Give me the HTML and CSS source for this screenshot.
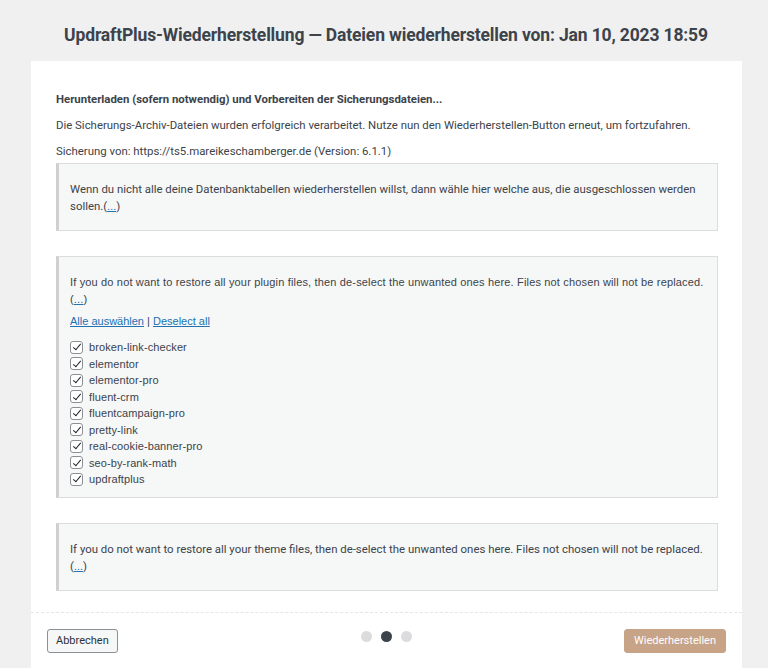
FILE: index.html
```html
<!DOCTYPE html>
<html lang="de">
<head>
    <meta charset="UTF-8">
    <title>UpdraftPlus-Wiederherstellung</title>
    <link rel="stylesheet" href="styles.css">
</head>
<body>
    <h1 class="title">UpdraftPlus-Wiederherstellung — Dateien wiederherstellen von: Jan 10, 2023 18:59</h1>
    <div class="card">
        <div class="content">
            <p class="step">Herunterladen (sofern notwendig) und Vorbereiten der Sicherungsdateien...</p>
            <p>Die Sicherungs-Archiv-Dateien wurden erfolgreich verarbeitet. Nutze nun den Wiederherstellen-Button erneut, um fortzufahren.</p>
            <p class="source">Sicherung von: https://ts5.mareikeschamberger.de (Version: 6.1.1)</p>

            <div class="notice">
                <p>Wenn du nicht alle deine Datenbanktabellen wiederherstellen willst, dann wähle hier welche aus, die ausgeschlossen werden sollen.(<a href="#" class="more">...</a>)</p>
            </div>

            <div class="notice wide">
                <p>If you do not want to restore all your plugin files, then de-select the unwanted ones here. Files not chosen will not be replaced. (<a href="#" class="more">...</a>)</p>
                <p class="select"><a href="#">Alle auswählen</a> | <a href="#">Deselect all</a></p>
                <ul class="plugins">
                    <li><span class="check"></span>broken-link-checker</li>
                    <li><span class="check"></span>elementor</li>
                    <li><span class="check"></span>elementor-pro</li>
                    <li><span class="check"></span>fluent-crm</li>
                    <li><span class="check"></span>fluentcampaign-pro</li>
                    <li><span class="check"></span>pretty-link</li>
                    <li><span class="check"></span>real-cookie-banner-pro</li>
                    <li><span class="check"></span>seo-by-rank-math</li>
                    <li><span class="check"></span>updraftplus</li>
                </ul>
            </div>

            <div class="notice">
                <p>If you do not want to restore all your theme files, then de-select the unwanted ones here. Files not chosen will not be replaced. (<a href="#" class="more">...</a>)</p>
            </div>
        </div>
        <div class="footer">
            <button class="btn">Abbrechen</button>
            <div class="dots">
                <span class="dot"></span>
                <span class="dot current"></span>
                <span class="dot"></span>
            </div>
            <button class="btn primary">Wiederherstellen</button>
        </div>
    </div>
</body>
</html>
```

FILE: styles.css
```css
body {
    font-family: "Roboto", "Liberation Sans", Arial, sans-serif;
    color: #3c434a;
    background-color: #f0f0f1;
    margin: 0;
    font-size: 11.4px;
}
p {
    margin: 0;
}
a {
    color: #2271b1;
}
.title {
    font-size: 17.5px;
    font-weight: bold;
    color: #3c434a;
    text-align: center;
    margin: 0;
    padding: 25px 0 0 4px;
    height: 36px;
    letter-spacing: -0.15px;
}
.card {
    background-color: #fff;
    margin: 0 26px 0 31px;
}
.content {
    padding: 30px 24px 21px 25px;
}
.content > p {
    line-height: 16px;
    margin-bottom: 10px;
}
.content > p.step {
    font-weight: bold;
}
.content > p.source {
    margin-bottom: 4px;
}
.notice {
    background-color: #f6f7f7;
    border: 1px solid #dcdcde;
    border-left: 3px solid #d0d0d2;
    padding: 17px 10px 15px 11px;
    margin-bottom: 25px;
}
.notice:last-child {
    margin-bottom: 0;
}
.notice p {
    line-height: 17px;
}
.notice.wide {
    font-family: "Liberation Sans", Arial, sans-serif;
    font-size: 11px;
    letter-spacing: 0.16px;
    padding-bottom: 9px;
}
.notice .select {
    margin: 5px 0 9px;
    font-size: 11px;
    letter-spacing: 0;
}
.plugins {
    margin: 0;
    padding: 0;
    list-style: none;
}
.plugins li {
    display: flex;
    align-items: center;
    height: 16.5px;
    font-size: 11px;
    letter-spacing: 0.1px;
}
.check {
    position: relative;
    width: 11px;
    height: 11px;
    border: 1px solid #8c8f94;
    border-radius: 3px;
    background-color: #fff;
    margin-right: 6px;
}
.check::after {
    content: "";
    position: absolute;
    left: 3.5px;
    top: 0.5px;
    width: 3px;
    height: 7px;
    border: solid #1d2327;
    border-width: 0 1.6px 1.6px 0;
    transform: rotate(40deg);
}
.footer {
    display: flex;
    justify-content: space-between;
    align-items: center;
    border-top: 1px dashed #e6e6e6;
    padding: 16px 16px 16px 16px;
}
.btn {
    font-family: "Roboto", "Liberation Sans", Arial, sans-serif;
    font-size: 11px;
    color: #2c3338;
    background-color: #f6f7f7;
    border: 1px solid #8c8f94;
    border-radius: 3px;
    height: 24px;
    padding: 0 8px;
}
.btn.primary {
    color: #fff;
    background-color: #c7a488;
    border-color: #c7a488;
    padding: 0 9px;
}
.dots {
    display: flex;
    gap: 9px;
    margin-bottom: 9px;
    margin-left: 32px;
}
.dot {
    width: 11px;
    height: 11px;
    border-radius: 50%;
    background-color: #dcdcde;
}
.dot.current {
    background-color: #3c434a;
}
```
